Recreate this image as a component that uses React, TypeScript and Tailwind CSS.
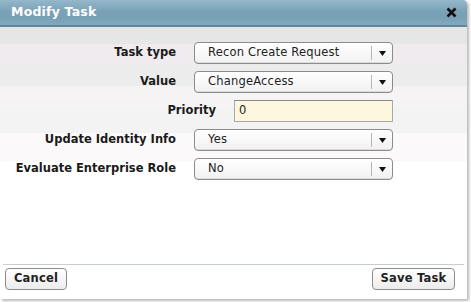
import React from 'react';

const font = { fontFamily: '"DejaVu Sans", Verdana, sans-serif' };

function Arrow() {
  return (
    <svg width="7" height="5" viewBox="0 0 7 5" className="block">
      <path d="M0 0 H7 L3.5 5 Z" fill="#111" />
    </svg>
  );
}

function SelectBox({ value }: { value: string }) {
  return (
    <div className="relative flex h-[22px] w-[199px] items-center rounded-[4px] border border-[#8c8c8c] bg-[linear-gradient(#ffffff,#f1f1f1)] shadow-[inset_0_-1px_0_#dcdcdc]">
      <span className="flex-1 pl-[13px] text-[11.5px] tracking-[0.2px] text-[#222]">{value}</span>
      <span className="h-[14px] w-px bg-[#b5b5b5]" />
      <span className="flex w-[20px] justify-center">
        <Arrow />
      </span>
    </div>
  );
}

function Row({ label, children, wide }: { label: string; children: React.ReactNode; wide?: boolean }) {
  return (
    <div className="flex h-[22px] items-center gap-[18px]">
      <div className={`${wide ? 'w-[216px]' : 'w-[176px]'} text-right text-[11.5px] font-bold text-[#1a1a1a]`}>
        {label}
      </div>
      {children}
    </div>
  );
}

function Button({ children, className }: { children: React.ReactNode; className?: string }) {
  return (
    <button
      className={`h-[22px] rounded-[4px] border border-[#8c8c8c] bg-[linear-gradient(#ffffff,#ececec)] text-[11.5px] font-bold tracking-[0.2px] text-[#222] ${className ?? ''}`}
    >
      {children}
    </button>
  );
}

export default function App() {
  return (
    <div className="h-[302px] w-[471px] overflow-hidden bg-white" style={font}>
      <div className="flex h-[299px] w-[467px] flex-col overflow-hidden rounded-tr-[4px] bg-white shadow-[2px_2px_3px_rgba(0,0,0,0.28)]">
        {/* header */}
        <div className="flex h-[27px] shrink-0 items-center justify-between border-b-2 border-[#5f8799] bg-[linear-gradient(#95b8ca,#7aa2b7_45%,#78a0b5_70%,#82aabe)] pl-[11px] pr-[10px]">
          <span className="text-[12.5px] font-bold tracking-[0.2px] text-white">Modify Task</span>
          <svg width="11" height="11" viewBox="0 0 11 11">
            <path d="M1.5 1.5 L9.5 9.5 M9.5 1.5 L1.5 9.5" stroke="#111" strokeWidth="2.6" />
          </svg>
        </div>

        {/* body */}
        <div className="flex flex-1 flex-col gap-[7px] bg-[linear-gradient(#e6e6e6_0px,#e6e6e6_17px,#efebee_17px,#efebee_38px,#ececec_38px,#ececec_59px,#f6f3f5_59px,#f6f3f5_81px,#f3f3f3_81px,#f3f3f3_106px,#fcf9fb_106px,#fcf9fb_135px,#ffffff_135px)] pt-[15px]">
          <Row label="Task type">
            <SelectBox value="Recon Create Request" />
          </Row>
          <Row label="Value">
            <SelectBox value="ChangeAccess" />
          </Row>
          <Row label="Priority" wide>
            <div className="flex h-[22px] w-[159px] items-center border border-[#a9a9a9] border-t-[#888] bg-[#fef7df] pl-[4px] text-[11.5px] text-[#222]">
              0
            </div>
          </Row>
          <Row label="Update Identity Info">
            <SelectBox value="Yes" />
          </Row>
          <Row label="Evaluate Enterprise Role">
            <SelectBox value="No" />
          </Row>
        </div>

        {/* footer */}
        <div className="mx-[3px] flex h-[35px] shrink-0 items-start justify-between border-t border-[#c6ced3] pl-[2px] pr-[9px] pt-[3px]">
          <Button className="w-[62px]">Cancel</Button>
          <Button className="w-[83px]">Save Task</Button>
        </div>
      </div>
    </div>
  );
}
